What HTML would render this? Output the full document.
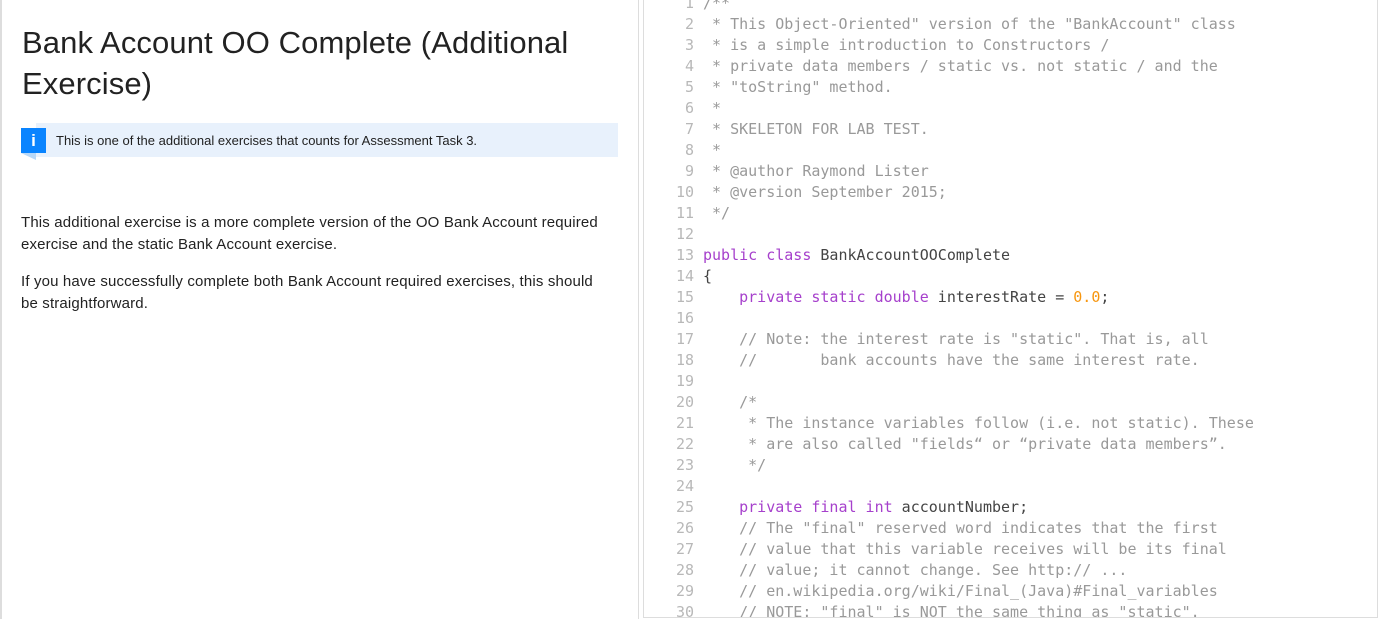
<!DOCTYPE html>
<html><head><meta charset="utf-8"><style>
body{margin:0;width:1382px;height:619px;overflow:hidden;background:#fff;font-family:"Liberation Sans",sans-serif;color:#222;}
#left{position:absolute;left:0;top:0;width:639px;height:619px;border-left:2px solid #ddd;border-right:1px solid #ddd;box-sizing:border-box;}
h1{position:absolute;left:20px;top:22px;margin:0;font-weight:normal;font-size:31px;line-height:41px;color:#222;letter-spacing:0.1px;white-space:nowrap;}
.info{position:absolute;left:34px;top:123px;width:582px;height:34px;background:#e8f1fc;}
.ibox{position:absolute;left:19px;top:128px;width:25px;height:25px;background:#0a84ff;color:#fff;font-weight:bold;font-size:17px;text-align:center;line-height:25px;}
.itri{position:absolute;left:19px;top:153px;width:0;height:0;border-top:7px solid #b8d8f8;border-left:15px solid transparent;}
.itext{position:absolute;left:54px;top:133px;font-size:13px;color:#222;white-space:nowrap;}
p{position:absolute;left:19px;margin:0;font-size:15px;line-height:22px;white-space:nowrap;letter-spacing:0.15px;}
#right{position:absolute;left:643px;top:-2px;width:735px;height:620px;border:1px solid #ddd;box-sizing:border-box;overflow:hidden;}
pre{margin:0;position:absolute;left:0;top:-6px;font-family:"DejaVu Sans Mono",monospace;font-size:15px;line-height:21px;color:#444;}
.n{display:inline-block;width:50px;text-align:right;color:#b8b8b8;padding-right:9px;}
.c{color:#999}.k{color:#a640cc}.o{color:#f7960f}
</style></head><body>
<div id="left">
<h1>Bank Account OO Complete (Additional<br>Exercise)</h1>
<div class="info"></div><div class="ibox">i</div><div class="itri"></div>
<div class="itext">This is one of the additional exercises that counts for Assessment Task 3.</div>
<p style="top:212px">This additional exercise is a more complete version of the OO Bank Account required<br>exercise and the static Bank Account exercise.</p>
<p style="top:271px">If you have successfully complete both Bank Account required exercises, this should<br>be straightforward.</p>
</div>
<div id="right"><pre>
<span class="n">1</span><span class="c">/**</span>
<span class="n">2</span><span class="c"> * This Object-Oriented" version of the "BankAccount" class</span>
<span class="n">3</span><span class="c"> * is a simple introduction to Constructors /</span>
<span class="n">4</span><span class="c"> * private data members / static vs. not static / and the</span>
<span class="n">5</span><span class="c"> * "toString" method.</span>
<span class="n">6</span><span class="c"> *</span>
<span class="n">7</span><span class="c"> * SKELETON FOR LAB TEST.</span>
<span class="n">8</span><span class="c"> *</span>
<span class="n">9</span><span class="c"> * @author Raymond Lister</span>
<span class="n">10</span><span class="c"> * @version September 2015;</span>
<span class="n">11</span><span class="c"> */</span>
<span class="n">12</span>
<span class="n">13</span><span class="k">public class</span> BankAccountOOComplete
<span class="n">14</span>{
<span class="n">15</span>    <span class="k">private static double</span> interestRate = <span class="o">0.0</span>;
<span class="n">16</span>
<span class="n">17</span><span class="c">    // Note: the interest rate is "static". That is, all</span>
<span class="n">18</span><span class="c">    //       bank accounts have the same interest rate.</span>
<span class="n">19</span>
<span class="n">20</span><span class="c">    /*</span>
<span class="n">21</span><span class="c">     * The instance variables follow (i.e. not static). These</span>
<span class="n">22</span><span class="c">     * are also called "fields“ or “private data members”.</span>
<span class="n">23</span><span class="c">     */</span>
<span class="n">24</span>
<span class="n">25</span>    <span class="k">private final int</span> accountNumber;
<span class="n">26</span><span class="c">    // The "final" reserved word indicates that the first</span>
<span class="n">27</span><span class="c">    // value that this variable receives will be its final</span>
<span class="n">28</span><span class="c">    // value; it cannot change. See http:// ...</span>
<span class="n">29</span><span class="c">    // en.wikipedia.org/wiki/Final_(Java)#Final_variables</span>
<span class="n">30</span><span class="c">    // NOTE: "final" is NOT the same thing as "static".</span>
</pre></div>
</body></html>
